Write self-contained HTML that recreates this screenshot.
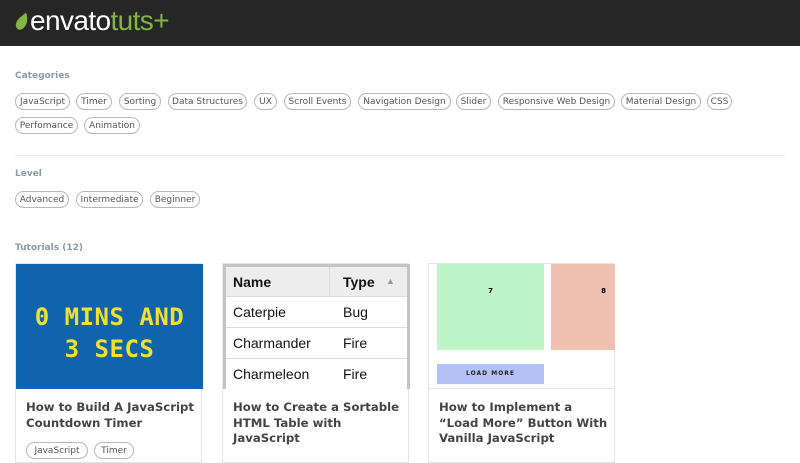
<!DOCTYPE html>
<html><head><meta charset="utf-8"><style>
*{margin:0;padding:0;box-sizing:border-box}
body{width:800px;height:450px;overflow:hidden;background:#fff;font-family:"DejaVu Sans","Liberation Sans",sans-serif;position:relative}
.hdr{position:absolute;left:0;top:0;width:800px;height:46px;background:#262626}
.logo{position:absolute;left:30px;top:5px;font-family:"Liberation Sans",sans-serif;font-size:28px;letter-spacing:-0.6px;color:#fff}
.logo span{color:#82b541;font-weight:normal}
.lbl{position:absolute;left:15px;font-size:9px;font-weight:bold;color:#8a9aa8}
.tag{position:absolute;height:17px;border:1px solid #b8b8b8;border-radius:9px;font-size:9px;color:#555;line-height:16px;text-align:center;white-space:nowrap}
.hr{position:absolute;left:15px;width:770px;top:155px;border-top:1px solid #e8e8e8}
.card{position:absolute;top:263px;width:187px;height:200px;border:1px solid #e6e6e6;background:#fff}
.ttl{position:absolute;left:10px;top:136px;width:175px;font-size:11.7px;font-weight:bold;color:#444;line-height:15.5px}
</style></head><body>
<div class="hdr">
<svg style="position:absolute;left:15px;top:12px" width="14" height="19" viewBox="0 0 14 18"><path d="M11 0C13 5 13 12 8 16C4 19 0 16 1 11C2 6 8 3 11 0Z" fill="#82b541"/></svg>
<div class="logo">envato<span>tuts+</span></div>
</div>
<div class="lbl" style="top:71px">Categories</div>
<div class="tag" style="left:15px;top:93px;width:55px">JavaScript</div>
<div class="tag" style="left:76px;top:93px;width:36px">Timer</div>
<div class="tag" style="left:119px;top:93px;width:42px">Sorting</div>
<div class="tag" style="left:168px;top:93px;width:79px">Data Structures</div>
<div class="tag" style="left:254px;top:93px;width:23px">UX</div>
<div class="tag" style="left:284px;top:93px;width:67px">Scroll Events</div>
<div class="tag" style="left:358px;top:93px;width:93px">Navigation Design</div>
<div class="tag" style="left:456px;top:93px;width:35px">Slider</div>
<div class="tag" style="left:498px;top:93px;width:117px">Responsive Web Design</div>
<div class="tag" style="left:621px;top:93px;width:80px">Material Design</div>
<div class="tag" style="left:707px;top:93px;width:25px">CSS</div>
<div class="tag" style="left:15px;top:117px;width:63px">Perfomance</div>
<div class="tag" style="left:84px;top:117px;width:56px">Animation</div>
<div class="hr"></div>
<div class="lbl" style="top:169px">Level</div>
<div class="tag" style="left:15px;top:191px;width:54px">Advanced</div>
<div class="tag" style="left:76px;top:191px;width:67px">Intermediate</div>
<div class="tag" style="left:150px;top:191px;width:50px">Beginner</div>
<div class="lbl" style="top:243px">Tutorials (12)</div>

<div class="card" style="left:15px">
<div style="position:absolute;left:0;top:0;width:187px;height:125px;background:#0f64ad;color:#f0e030;font-family:'DejaVu Sans Mono','Liberation Mono',monospace;font-weight:bold;font-size:24px;text-align:center;line-height:32px;padding-top:37px;letter-spacing:0.5px">0 MINS AND<br>3 SECS</div>
<div class="ttl">How to Build A JavaScript Countdown Timer</div>
<div class="tag" style="left:10px;top:178px;width:62px">JavaScript</div>
<div class="tag" style="left:78px;top:178px;width:40px">Timer</div>
</div>

<div class="card" style="left:222px">
<div style="position:absolute;left:0;top:0;width:187px;height:125px;background:#c4c4c4;padding:3px 3px 0 3px">
<div style="background:#fff;height:122px;font-family:'Liberation Sans',sans-serif;font-size:14px;color:#111;position:relative">
<div style="height:30px;background:#ededed;border-bottom:1px solid #ddd;position:relative"><b style="position:absolute;left:7px;top:7px">Name</b><div style="position:absolute;left:103px;top:0;height:30px;border-left:1px solid #ddd"></div><b style="position:absolute;left:117px;top:7px">Type</b><span style="position:absolute;left:160px;top:9px;font-size:9px;color:#999">▲</span></div>
<div style="height:31px;border-bottom:1px solid #ddd;position:relative"><span style="position:absolute;left:7px;top:7px">Caterpie</span><span style="position:absolute;left:117px;top:7px">Bug</span></div>
<div style="height:31px;border-bottom:1px solid #ddd;position:relative"><span style="position:absolute;left:7px;top:7px">Charmander</span><span style="position:absolute;left:117px;top:7px">Fire</span></div>
<div style="height:30px;position:relative"><span style="position:absolute;left:7px;top:7px">Charmeleon</span><span style="position:absolute;left:117px;top:7px">Fire</span></div>
</div></div>
<div class="ttl">How to Create a Sortable HTML Table with JavaScript</div>
</div>

<div class="card" style="left:428px">
<div style="position:absolute;left:8px;top:0;width:107px;height:86px;background:#bdf5c9;font-size:7px;font-weight:bold;text-align:center;padding-top:23px">7</div>
<div style="position:absolute;left:122px;top:0;width:64px;height:86px;background:#f0c0b0;font-size:7px;font-weight:bold;text-align:right;padding:23px 9px 0 0">8</div>
<div style="position:absolute;left:8px;top:100px;width:107px;height:20px;background:#b3c1f5;font-size:6px;letter-spacing:1px;font-weight:bold;text-align:center;line-height:20px;color:#222">LOAD MORE</div>
<div style="position:absolute;left:0;top:124px;width:186px;border-top:1px solid #e6e6e6"></div>
<div class="ttl">How to Implement a “Load More” Button With Vanilla JavaScript</div>
</div>
</body></html>
